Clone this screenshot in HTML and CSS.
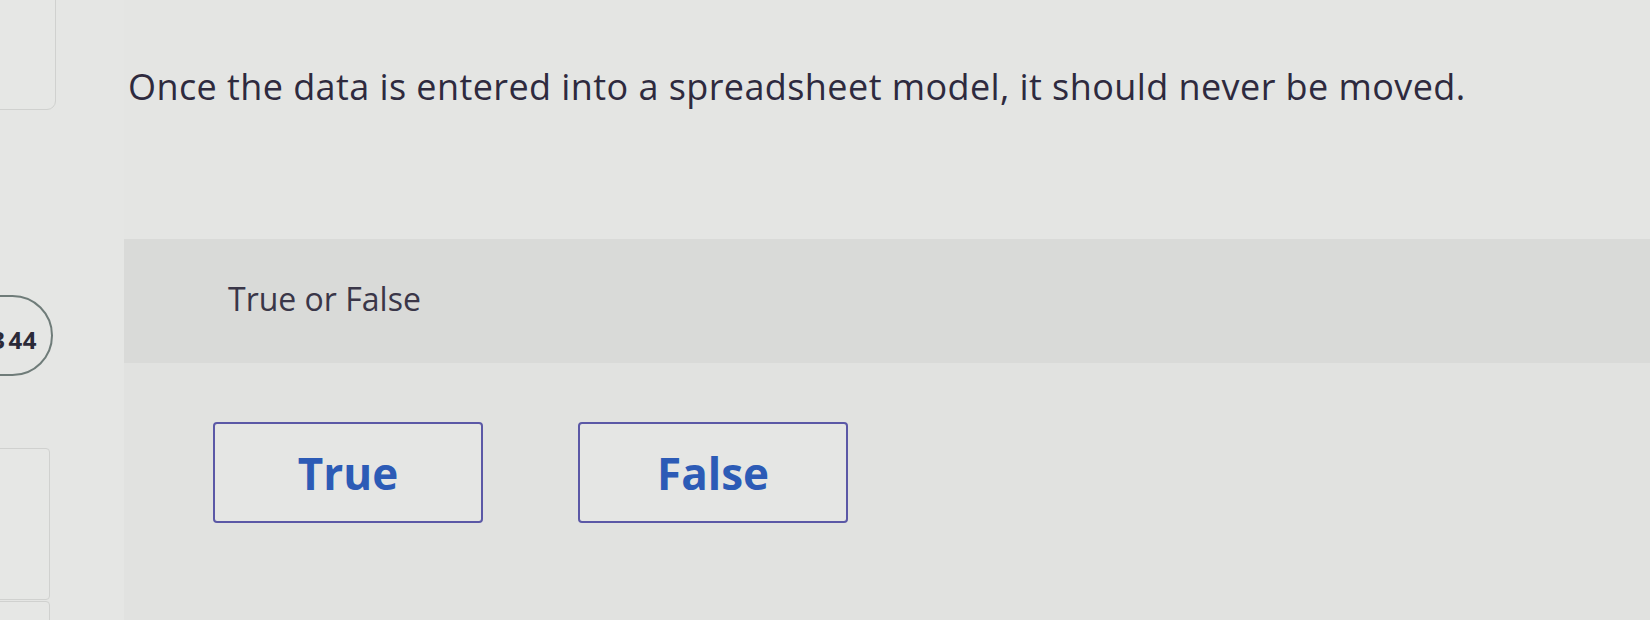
FILE: index.html
```html
<!DOCTYPE html>
<html lang="en">
<head>
<meta charset="utf-8">
<title>True or False</title>
<link rel="stylesheet" href="styles.css">
</head>
<body>
<div class="page">
  <aside class="sidebar">
    <div class="side-card top"></div>
    <div class="badge"><span class="badge-lead">3</span>44</div>
    <div class="side-card bottom"></div>
    <div class="side-card next"></div>
  </aside>
  <main class="content">
    <p class="question">Once the data is entered into a spreadsheet model, it should never be moved.</p>
    <section class="panel">
      <div class="panel-head">True or False</div>
      <div class="choices">
        <button class="choice">True</button>
        <button class="choice">False</button>
      </div>
    </section>
  </main>
</div>
</body>
</html>
```

FILE: styles.css
```css
html, body {
  margin: 0;
  padding: 0;
  width: 1650px;
  height: 620px;
  overflow: hidden;
  background: #e4e5e3;
  font-family: "Open Sans", "Liberation Sans", sans-serif;
}

.page {
  display: grid;
  grid-template-columns: 124px 1fr;
  height: 620px;
}

.sidebar {
  display: flex;
  flex-direction: column;
  overflow: hidden;
  background: #e5e6e4;
}

.sidebar > * {
  flex-shrink: 0;
}

.side-card {
  border: 1.5px solid #d0d1cf;
  background: #e6e7e5;
  box-sizing: border-box;
}

.side-card.top {
  width: 68px;
  height: 112px;
  margin-left: -12px;
  margin-top: -2px;
  border-radius: 0 0 9px 0;
}

.badge {
  margin-left: -50px;
  margin-top: 185px;
  width: 103px;
  height: 81px;
  box-sizing: border-box;
  border: 2px solid #6f7c79;
  border-radius: 41px;
  display: flex;
  align-items: center;
  justify-content: flex-end;
  padding: 8px 14px 0 0;
  font-size: 24px;
  font-weight: 700;
  color: #2b2a38;
  letter-spacing: 0.5px;
  white-space: nowrap;
}

.badge-lead {
  margin-right: 3px;
}

.side-card.bottom {
  width: 60px;
  height: 152px;
  margin-left: -10px;
  margin-top: 72px;
  border-radius: 0 4px 4px 0;
}

.side-card.next {
  width: 60px;
  height: 60px;
  margin-left: -10px;
  margin-top: 1px;
  border-radius: 0 4px 0 0;
}

.content {
  display: flex;
  flex-direction: column;
  padding-top: 63px;
  background: #e4e5e3;
}

.question {
  margin: 0 0 0 4px;
  font-size: 36px;
  line-height: 48px;
  letter-spacing: 0.42px;
  color: #2e2a3e;
  white-space: nowrap;
}

.panel {
  margin-top: 128px;
  display: flex;
  flex-direction: column;
  flex: 1;
  background: #e1e2e0;
}

.panel-head {
  height: 124px;
  box-sizing: border-box;
  background: #d9dad8;
  padding: 40px 0 0 104px;
  font-size: 32px;
  line-height: 40px;
  color: #3a3648;
}

.choices {
  display: flex;
  gap: 95px;
  padding: 59px 0 0 89px;
}

.choice {
  width: 270px;
  height: 101px;
  box-sizing: border-box;
  border: 2px solid #5b58a6;
  border-radius: 4px;
  background: #e5e6e4;
  font-family: "Open Sans", "Liberation Sans", sans-serif;
  font-size: 44px;
  font-weight: 700;
  color: #2c5bb6;
  padding: 0;
  margin: 0;
  cursor: pointer;
}
```
